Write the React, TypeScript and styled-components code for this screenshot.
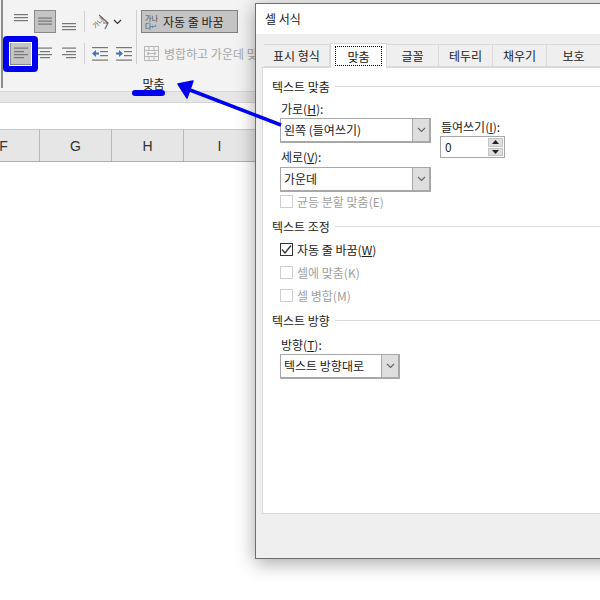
import styled, { createGlobalStyle } from 'styled-components';

const GlobalStyle = createGlobalStyle`
  html, body {
    margin: 0;
    padding: 0;
    background: #fff;
  }
  body {
    font-family: 'Noto Sans CJK KR', 'Noto Sans', sans-serif;
    font-size: 12px;
    color: #222;
  }
`;

const COLUMNS = ['F', 'G', 'H', 'I', 'J'];
const TABS = [
  { name: '표시 형식', width: 66 },
  { name: '맞춤', width: 57 },
  { name: '글꼴', width: 52 },
  { name: '테두리', width: 54 },
  { name: '채우기', width: 54 },
  { name: '보호', width: 54 },
];

function Lines({ ys, align }: { ys: number[]; align: 'left' | 'center' | 'right' | 'full' }) {
  return (
    <svg width="14" height="23" viewBox="0 0 14 23">
      {ys.map((y, i) => {
        const short = align !== 'full' && i % 2 === 1;
        const w = short ? 10 : 14;
        const x = align === 'right' ? 14 - w : align === 'center' ? (14 - w) / 2 : 0;
        return <rect key={y} x={x} y={y} width={w} height={1.2} fill="#767676" />;
      })}
    </svg>
  );
}

function OrientationIcon() {
  return (
    <svg width="18" height="18" viewBox="0 0 18 18">
      <text x="1" y="14" fontSize="7" fill="#666" transform="rotate(-45 5 12)" fontFamily="'Noto Sans CJK KR', sans-serif">
        가나
      </text>
      <path d="M7 2 L16 10 L13 16 M16 10 L11 10" fill="none" stroke="#666" strokeWidth="1.2" />
    </svg>
  );
}

function Chevron({ color = '#333' }: { color?: string }) {
  return (
    <svg width="9" height="6" viewBox="0 0 9 6">
      <path d="M1 1 L4.5 4.5 L8 1" fill="none" stroke={color} strokeWidth="1.2" />
    </svg>
  );
}

function IndentIcon({ flip }: { flip?: boolean }) {
  return (
    <svg width="17" height="14" viewBox="0 0 17 14">
      <rect x="0" y="0" width="16" height="1.2" fill="#767676" />
      <rect x="8" y="4" width="8" height="1.2" fill="#767676" />
      <rect x="8" y="8" width="8" height="1.2" fill="#767676" />
      <rect x="0" y="12.5" width="16" height="1.2" fill="#767676" />
      {flip ? (
        <path d="M0 5.5 H3 V3 L7 6.5 L3 10 V7.5 H0 Z" fill="#3f78b5" />
      ) : (
        <path d="M7 5.5 H4 V3 L0 6.5 L4 10 V7.5 H7 Z" fill="#3f78b5" />
      )}
    </svg>
  );
}

function MergeIcon() {
  return (
    <svg width="15" height="15" viewBox="0 0 15 15">
      <path
        d="M.5.5 H14.5 V14.5 H.5 Z M.5 4.5 H14.5 M.5 10.5 H14.5 M5 .5 V4.5 M10 .5 V4.5 M5 10.5 V14.5 M10 10.5 V14.5"
        fill="none"
        stroke="#b5b5b5"
      />
      <path d="M3 7.5 H12 M3 7.5 L5 6 M3 7.5 L5 9 M12 7.5 L10 6 M12 7.5 L10 9" fill="none" stroke="#b5b5b5" />
    </svg>
  );
}

function SpinArrow({ up }: { up?: boolean }) {
  return (
    <svg width="7" height="4" viewBox="0 0 7 4">
      <path d={up ? 'M3.5 0 L7 4 H0 Z' : 'M0 0 H7 L3.5 4 Z'} fill="#222" />
    </svg>
  );
}

function Dropdown({ value, width }: { value: string; width: number }) {
  return (
    <Select $width={width}>
      <SelectValue>{value}</SelectValue>
      <SelectButton>
        <Chevron color="#666" />
      </SelectButton>
    </Select>
  );
}

function Check({ label, mnemonic, checked, disabled }: { label: string; mnemonic: string; checked?: boolean; disabled?: boolean }) {
  return (
    <CheckRow $disabled={disabled}>
      <CheckBox $disabled={disabled}>
        {checked && (
          <svg width="11" height="11" viewBox="0 0 11 11">
            <path d="M1 5.5 L4 9 L10 1.5" fill="none" stroke="#333" strokeWidth="1.3" />
          </svg>
        )}
      </CheckBox>
      <span>
        {label}({disabled ? mnemonic : <u>{mnemonic}</u>})
      </span>
    </CheckRow>
  );
}

export default function App() {
  return (
    <Page>
      <GlobalStyle />
      <Ribbon>
        <RibbonGroup>
          <Tools>
            <LeftTools>
              <ToolRow>
                <ToolCell><Lines ys={[4, 7, 10]} align="full" /></ToolCell>
                <ToolCell $active><Lines ys={[7.5, 10.5, 13.5]} align="full" /></ToolCell>
                <ToolCell><Lines ys={[13, 16, 19]} align="full" /></ToolCell>
                <ToolSep />
                <OrientationCell>
                  <OrientationIcon />
                  <Chevron />
                </OrientationCell>
              </ToolRow>
              <ToolRow>
                <ToolCell $active>
                  <Lines ys={[5.5, 9, 12, 15]} align="left" />
                  <BlueBox />
                </ToolCell>
                <ToolCell><Lines ys={[5.5, 9, 12, 15]} align="center" /></ToolCell>
                <ToolCell><Lines ys={[5.5, 9, 12, 15]} align="right" /></ToolCell>
                <ToolSep />
                <IndentCells>
                  <IndentIcon />
                  <IndentIcon flip />
                </IndentCells>
              </ToolRow>
            </LeftTools>
            <TallSep />
            <RightTools>
              <WrapButton>
                <WrapIcon>
                  <span>가나</span>
                  <span>다<WrapArrow>↵</WrapArrow></span>
                </WrapIcon>
                자동 줄 바꿈
              </WrapButton>
              <MergeButton>
                <MergeIcon />
                병합하고 가운데 맞춤
              </MergeButton>
            </RightTools>
          </Tools>
          <GroupLabel>맞춤</GroupLabel>
          <LabelMark />
        </RibbonGroup>
      </Ribbon>
      <Band />
      <FormulaBar />
      <ColumnHeaders>
        {COLUMNS.map((c) => (
          <ColumnHeader key={c}>{c}</ColumnHeader>
        ))}
      </ColumnHeaders>

      <Dialog>
        <TitleBar>셀 서식</TitleBar>
        <Tabs>
          {TABS.map((tab, i) => (
            <Tab key={tab.name} $active={i === 1} $width={tab.width}>
              {i === 1 ? <FocusRing>{tab.name}</FocusRing> : tab.name}
            </Tab>
          ))}
        </Tabs>
        <Panel>
          <Section>텍스트 맞춤</Section>
          <AlignForm>
            <FormColumn>
              <FieldLabel>가로(<u>H</u>):</FieldLabel>
              <Dropdown value="왼쪽 (들여쓰기)" width={151} />
              <FieldLabelGap>세로(<u>V</u>):</FieldLabelGap>
              <Dropdown value="가운데" width={151} />
            </FormColumn>
            <IndentColumn>
              <FieldLabel>들여쓰기(<u>I</u>):</FieldLabel>
              <Spinner>
                <SpinValue>0</SpinValue>
                <SpinButtons>
                  <SpinButton><SpinArrow up /></SpinButton>
                  <SpinButton><SpinArrow /></SpinButton>
                </SpinButtons>
              </Spinner>
            </IndentColumn>
          </AlignForm>
          <FormBlock>
            <Check label="균등 분할 맞춤" mnemonic="E" disabled />
          </FormBlock>
          <SectionGap>텍스트 조정</SectionGap>
          <CheckList>
            <Check label="자동 줄 바꿈" mnemonic="W" checked />
            <Check label="셀에 맞춤" mnemonic="K" disabled />
            <Check label="셀 병합" mnemonic="M" disabled />
          </CheckList>
          <SectionGap>텍스트 방향</SectionGap>
          <DirectionBlock>
            <FieldLabel>방향(<u>T</u>):</FieldLabel>
            <Dropdown value="텍스트 방향대로" width={120} />
          </DirectionBlock>
        </Panel>
      </Dialog>

      <Arrow width="600" height="160" viewBox="0 0 600 160">
        <path d="M190 90 L281 125" stroke="#0000f0" strokeWidth="3.5" fill="none" />
        <path d="M178 84 L193 81 L187 98 Z" fill="#0000f0" stroke="#0000f0" strokeLinejoin="round" strokeWidth="1.5" />
      </Arrow>
    </Page>
  );
}

const Page = styled.div`
  position: relative;
  width: 600px;
  height: 600px;
  overflow: hidden;
  background: #fff;
`;

const Ribbon = styled.div`
  height: 92px;
  background: #f3f3f3;
  border-bottom: 1px solid #d4d4d4;
  box-sizing: border-box;
`;

const RibbonGroup = styled.div`
  position: relative;
  box-sizing: border-box;
  width: 297px;
  height: 88px;
  margin-left: 1px;
  padding: 10px 0 0 6px;
  border-left: 2px solid #8c8c8c;
`;

const Tools = styled.div`
  display: flex;
  height: 56px;
`;

const LeftTools = styled.div`
  display: flex;
  flex-direction: column;
  gap: 9px;
  width: 127px;
`;

const ToolRow = styled.div`
  display: flex;
  align-items: center;
  height: 23px;
`;

const ToolCell = styled.div<{ $active?: boolean }>`
  position: relative;
  box-sizing: border-box;
  display: flex;
  justify-content: center;
  width: ${(p) => (p.$active ? '22px' : '24px')};
  margin: ${(p) => (p.$active ? '0 1px' : '0')};
  height: 23px;
  background: ${(p) => (p.$active ? '#c4c4c4' : 'transparent')};
  outline: ${(p) => (p.$active ? '1px solid #8a8a8a' : 'none')};
  outline-offset: -1px;
`;

const BlueBox = styled.div`
  position: absolute;
  inset: -6px -6px -7px -7px;
  border: 6px solid #0000f0;
  border-radius: 4px;
  box-shadow: inset 0 0 0 1px #fff;
`;

const ToolSep = styled.div`
  width: 1px;
  height: 21px;
  margin: 0 7px 0 3px;
  background: #d0d0d0;
`;

const OrientationCell = styled.div`
  display: flex;
  align-items: center;
  gap: 3px;
`;

const IndentCells = styled.div`
  display: flex;
  gap: 7px;
`;

const TallSep = styled.div`
  width: 1px;
  height: 54px;
  margin-right: 4px;
  background: #d0d0d0;
`;

const RightTools = styled.div`
  display: flex;
  flex-direction: column;
  gap: 9px;
`;

const WrapButton = styled.div`
  box-sizing: border-box;
  display: flex;
  align-items: center;
  gap: 3px;
  width: 97px;
  height: 23px;
  padding-left: 3px;
  background: #c4c4c4;
  border: 1px solid #808080;
  white-space: nowrap;
  line-height: 1;
`;

const WrapIcon = styled.div`
  display: flex;
  flex-direction: column;
  width: 15px;
  font-size: 7px;
  line-height: 8px;
  color: #444;
`;

const WrapArrow = styled.span`
  color: #3f78b5;
`;

const MergeButton = styled.div`
  display: flex;
  align-items: center;
  gap: 5px;
  height: 23px;
  padding-left: 3px;
  color: #a6a6a6;
  white-space: nowrap;
`;

const GroupLabel = styled.div`
  margin-top: 10px;
  text-align: center;
  line-height: 16px;
  color: #222;
`;

const LabelMark = styled.div`
  position: absolute;
  left: 129px;
  top: 90px;
  width: 33px;
  height: 6px;
  border-radius: 3px;
  background: #0000f0;
`;

const Band = styled.div`
  height: 10px;
  background: #e6e6e6;
  border-bottom: 1px solid #d4d4d4;
`;

const FormulaBar = styled.div`
  height: 26px;
  background: #fff;
  border-bottom: 1px solid #c8c8c8;
`;

const ColumnHeaders = styled.div`
  display: flex;
  height: 31px;
  padding-left: 0;
  margin-left: -32px;
  background: #e6e6e6;
  border-bottom: 1px solid #b0b0b0;
`;

const ColumnHeader = styled.div`
  box-sizing: border-box;
  flex: 0 0 72px;
  display: flex;
  align-items: center;
  justify-content: center;
  border-right: 1px solid #b8b8b8;
  font-family: 'Liberation Sans', sans-serif;
  font-size: 14px;
  color: #333;
`;

const Dialog = styled.div`
  position: absolute;
  left: 255px;
  top: 3px;
  box-sizing: border-box;
  width: 400px;
  height: 556px;
  background: #efefef;
  border: 1px solid #6e6e6e;
  box-shadow: 0 4px 18px rgba(0, 0, 0, 0.35);
`;

const TitleBar = styled.div`
  height: 30px;
  padding-left: 9px;
  background: #fff;
  line-height: 30px;
`;

const Tabs = styled.div`
  display: flex;
  align-items: flex-end;
  height: 33px;
  padding-left: 8px;
`;

const Tab = styled.div<{ $active?: boolean; $width: number }>`
  position: relative;
  box-sizing: border-box;
  display: flex;
  align-items: center;
  justify-content: center;
  width: ${(p) => p.$width}px;
  height: ${(p) => (p.$active ? '25px' : '23px')};
  margin-bottom: ${(p) => (p.$active ? '-1px' : '0')};
  background: ${(p) => (p.$active ? '#fff' : '#efefef')};
  border: 1px solid #d9d9d9;
  border-bottom: ${(p) => (p.$active ? 'none' : '1px solid #d9d9d9')};
  border-left-width: ${(p) => (p.$active ? '1px' : '0')};
  z-index: ${(p) => (p.$active ? 1 : 0)};
`;

const FocusRing = styled.span`
  box-sizing: border-box;
  display: flex;
  align-items: center;
  justify-content: center;
  width: 47px;
  height: 20px;
  border: 1px dotted #000;
`;

const Panel = styled.div`
  box-sizing: border-box;
  height: 447px;
  margin-left: 6px;
  padding: 9px 0 0 9px;
  background: #fff;
  border: 1px solid #d9d9d9;
`;

const Section = styled.div`
  display: flex;
  align-items: center;
  gap: 5px;
  height: 18px;
  &::after {
    content: '';
    flex: 1;
    height: 1px;
    background: #d9d9d9;
  }
`;

const SectionGap = styled(Section)`
  margin-top: 9px;
`;

const AlignForm = styled.div`
  display: flex;
  gap: 9px;
  margin: 5px 0 0 8px;
`;

const FormColumn = styled.div`
  display: flex;
  flex-direction: column;
`;

const IndentColumn = styled.div`
  display: flex;
  flex-direction: column;
  padding-top: 18px;
`;

const FieldLabel = styled.div`
  height: 18px;
  line-height: 18px;
  margin-left: 1px;
`;

const FieldLabelGap = styled(FieldLabel)`
  margin-top: 5px;
  margin-bottom: 1px;
`;

const Select = styled.div<{ $width: number }>`
  box-sizing: border-box;
  display: flex;
  width: ${(p) => p.$width}px;
  height: 25px;
  background: #fff;
  border: 2px solid #a8a8a8;
  border-width: 1px 2px 2px 1px;
`;

const SelectValue = styled.div`
  flex: 1;
  padding-left: 3px;
  line-height: 21px;
  white-space: nowrap;
`;

const SelectButton = styled.div`
  display: flex;
  align-items: center;
  justify-content: center;
  width: 16px;
  background: #dedede;
  border-left: 1px solid #a8a8a8;
`;

const Spinner = styled.div`
  box-sizing: border-box;
  display: flex;
  width: 65px;
  height: 22px;
  border: 1px solid #a8a8a8;
`;

const SpinValue = styled.div`
  flex: 1;
  padding-left: 4px;
  line-height: 20px;
`;

const SpinButtons = styled.div`
  display: flex;
  flex-direction: column;
  gap: 1px;
  width: 15px;
  padding: 1px 1px 1px 0;
`;

const SpinButton = styled.div`
  flex: 1;
  display: flex;
  align-items: center;
  justify-content: center;
  background: #dedede;
  border: 1px solid #c4c4c4;
`;

const FormBlock = styled.div`
  margin: 3px 0 0 8px;
`;

const CheckList = styled.div`
  display: flex;
  flex-direction: column;
  gap: 10px;
  margin: 8px 0 0 8px;
`;

const CheckRow = styled.div<{ $disabled?: boolean }>`
  display: flex;
  align-items: center;
  gap: 4px;
  height: 13px;
  color: ${(p) => (p.$disabled ? '#a0a0a0' : '#222')};
  white-space: nowrap;
`;

const CheckBox = styled.div<{ $disabled?: boolean }>`
  box-sizing: border-box;
  display: flex;
  align-items: center;
  justify-content: center;
  width: 13px;
  height: 13px;
  background: #fff;
  border: 1px solid ${(p) => (p.$disabled ? '#cfcfcf' : '#333')};
`;

const DirectionBlock = styled.div`
  margin: 7px 0 0 8px;
`;

const Arrow = styled.svg`
  position: absolute;
  left: 0;
  top: 0;
  pointer-events: none;
`;
